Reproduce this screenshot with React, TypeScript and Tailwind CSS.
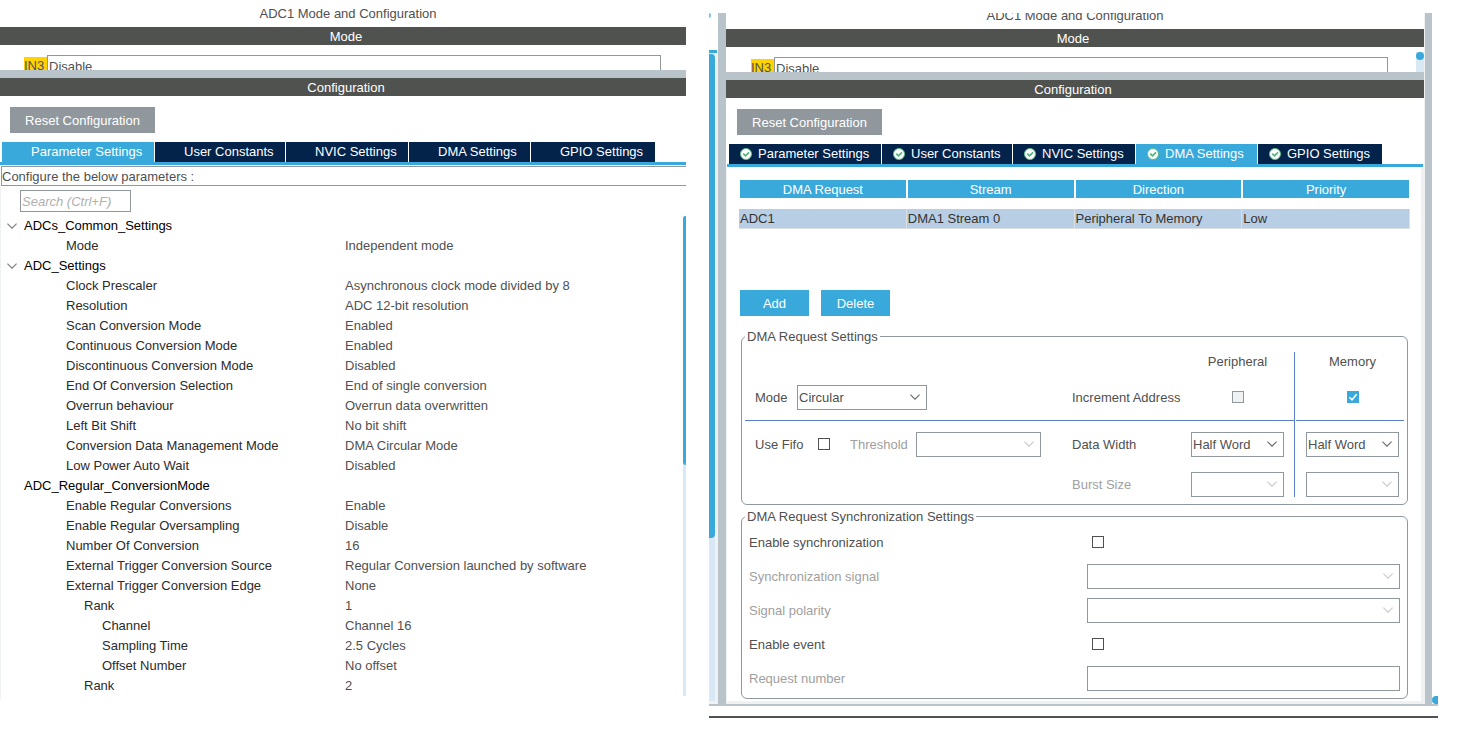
import { useId, useState, type ReactNode } from "react";

type Tab = { name: string; width: string };

const TABS: Tab[] = [
  { name: "Parameter Settings", width: "w-[152px]" },
  { name: "User Constants", width: "w-[130px]" },
  { name: "NVIC Settings", width: "w-[122px]" },
  { name: "DMA Settings", width: "w-[121px]" },
  { name: "GPIO Settings", width: "w-[124px]" },
];

type Row = { name: string; value?: string; level: 0 | 1 | 2 | 3; open?: boolean };

const ROWS: Row[] = [
  { name: "ADCs_Common_Settings", level: 0, open: true },
  { name: "Mode", value: "Independent mode", level: 1 },
  { name: "ADC_Settings", level: 0, open: true },
  { name: "Clock Prescaler", value: "Asynchronous clock mode divided by 8", level: 1 },
  { name: "Resolution", value: "ADC 12-bit resolution", level: 1 },
  { name: "Scan Conversion Mode", value: "Enabled", level: 1 },
  { name: "Continuous Conversion Mode", value: "Enabled", level: 1 },
  { name: "Discontinuous Conversion Mode", value: "Disabled", level: 1 },
  { name: "End Of Conversion Selection", value: "End of single conversion", level: 1 },
  { name: "Overrun behaviour", value: "Overrun data overwritten", level: 1 },
  { name: "Left Bit Shift", value: "No bit shift", level: 1 },
  { name: "Conversion Data Management Mode", value: "DMA Circular Mode", level: 1 },
  { name: "Low Power Auto Wait", value: "Disabled", level: 1 },
  { name: "ADC_Regular_ConversionMode", level: 0 },
  { name: "Enable Regular Conversions", value: "Enable", level: 1 },
  { name: "Enable Regular Oversampling", value: "Disable", level: 1 },
  { name: "Number Of Conversion", value: "16", level: 1 },
  { name: "External Trigger Conversion Source", value: "Regular Conversion launched by software", level: 1 },
  { name: "External Trigger Conversion Edge", value: "None", level: 1 },
  { name: "Rank", value: "1", level: 2 },
  { name: "Channel", value: "Channel 16", level: 3 },
  { name: "Sampling Time", value: "2.5 Cycles", level: 3 },
  { name: "Offset Number", value: "No offset", level: 3 },
  { name: "Rank", value: "2", level: 2 },
];

const INDENT = ["", "pl-[66px]", "pl-[84px]", "pl-[102px]"];

function Chevron({ className = "" }: { className?: string }) {
  return (
    <svg viewBox="0 0 10 6" className={`h-[6px] w-[10px] shrink-0 ${className}`} fill="none" stroke="currentColor" strokeWidth="1.2" aria-hidden="true">
      <path d="M0.4 0.6 L5 5.2 L9.6 0.6" />
    </svg>
  );
}

function StatusIcon() {
  return (
    <svg viewBox="0 0 12 12" className="h-3 w-3 shrink-0" aria-hidden="true">
      <circle cx="6" cy="6" r="5.5" fill="#fff" stroke="#5fba86" strokeWidth="1" />
      <path d="M3.2 5.6 L5.5 7.9 L9 4.4" fill="none" stroke="#4fb37c" strokeWidth="1.6" />
    </svg>
  );
}

function Bar({ children, className }: { children: ReactNode; className: string }) {
  return <h2 className={`h-[18px] bg-[#505250] text-center leading-5 text-white ${className}`}>{children}</h2>;
}

function ModeSection({ className, scrollbar }: { className: string; scrollbar?: boolean }) {
  const id = useId();
  return (
    <div className="flex h-[25px] overflow-hidden">
      <div className={`flex min-w-0 flex-1 ${className}`}>
        <label htmlFor={id} className="mt-3 h-5 w-[23px] shrink-0 bg-[#ffd200] leading-[18px]">
          IN3
        </label>
        <input id={id} defaultValue="Disable" className="mt-[10px] h-[22px] min-w-0 flex-1 border border-[#90989e] bg-white px-px" />
      </div>
      {scrollbar && (
        <div className="mt-[5px] h-5 w-2 bg-[#d9e8f5]">
          <div className="h-2 rounded-full bg-[#39a9dc]" />
        </div>
      )}
    </div>
  );
}

function TabBar({ selected, status }: { selected: string; status?: boolean }) {
  return (
    <div role="tablist" className="flex gap-px">
      {TABS.map((t) => (
        <button
          key={t.name}
          role="tab"
          aria-selected={t.name === selected}
          className={`flex h-5 shrink-0 items-center gap-[6px] pl-[11px] whitespace-nowrap text-white ${t.width} ${
            t.name === selected ? "bg-[#39a9dc]" : "bg-[#03234b]"
          }`}
        >
          {status ? <StatusIcon /> : <span className="w-3" />}
          {t.name}
        </button>
      ))}
    </div>
  );
}

function ResetButton() {
  return <button className="h-[26px] w-[145px] bg-[#90989e] pt-[2px] text-white">Reset Configuration</button>;
}

function ParameterTree() {
  return (
    <div className="flex pb-[3px]">
      <table className="w-full table-fixed border-collapse text-left">
        <colgroup>
          <col className="w-[343px]" />
          <col />
        </colgroup>
        <tbody>
          {ROWS.map((r, i) =>
            r.level === 0 ? (
              <tr key={i} className="h-5">
                <th colSpan={2} className="p-0 font-normal text-black">
                  <div className="flex items-center">
                    {r.open ? (
                      <button aria-label={`Collapse ${r.name}`} className="pr-[7px] pl-[6px] text-[#808080]">
                        <Chevron />
                      </button>
                    ) : (
                      <span className="w-[23px]" />
                    )}
                    {r.name}
                  </div>
                </th>
              </tr>
            ) : (
              <tr key={i} className="h-5">
                <th className={`p-0 font-normal text-[#2b2b2b] ${INDENT[r.level]}`}>
                  <div className="-ml-px">{r.name}</div>
                </th>
                <td className="p-0 pl-px">{r.value}</td>
              </tr>
            ),
          )}
        </tbody>
      </table>
      <div className="flex w-[3px] shrink-0 flex-col bg-[#d9e8f5]">
        <div className="h-[249px] rounded-l-full bg-[#39a9dc]" />
      </div>
    </div>
  );
}

function ParameterPanel() {
  return (
    <section className="min-w-0 flex-[686]">
      <h1 className="h-[27px] pl-[10px] text-center leading-[27px]">ADC1 Mode and Configuration</h1>
      <Bar className="pl-[6px]">Mode</Bar>
      <ModeSection className="mr-[25px] ml-6" />
      <div className="h-2 bg-[#b8c4ca]" />
      <Bar className="pl-[6px]">Configuration</Bar>
      <div className="px-[10px] py-[11px]">
        <ResetButton />
      </div>
      <div className="-mt-[2px] border-b-[3px] border-[#39a9dc] pl-[2px]">
        <TabBar selected="Parameter Settings" />
      </div>
      <div className="mt-px ml-px h-5 border-y border-l border-[#90989e] leading-5">Configure the below parameters :</div>
      <div className="border-l border-[#f0f1f2]">
        <div className="px-[19px] py-1">
          <input
            aria-label="Search"
            placeholder="Search (Ctrl+F)"
            className="block h-[22px] w-[111px] border border-[#90989e] px-px italic placeholder:text-[#b0b0b0]"
          />
        </div>
        <ParameterTree />
      </div>
    </section>
  );
}

function Select({ label, value, className, disabled, id }: { label?: string; value?: string; className: string; disabled?: boolean; id?: string }) {
  return (
    <div className={`relative shrink-0 ${className}`}>
      <select
        id={id}
        aria-label={label}
        disabled={disabled}
        className="block h-[25px] w-full appearance-none border border-[#90989e] bg-white pl-px text-[#505050]"
      >
        <option>{value}</option>
      </select>
      <Chevron className={`pointer-events-none absolute top-[9px] right-[7px] ${disabled ? "text-[#cdcdcd]" : "text-[#707070]"}`} />
    </div>
  );
}

function Checkbox({ label, id, initial = false, disabled }: { label?: string; id?: string; initial?: boolean; disabled?: boolean }) {
  const [checked, setChecked] = useState(initial);
  return (
    <span className="relative mb-px block h-3 w-3 shrink-0">
      <input
        id={id}
        aria-label={label}
        type="checkbox"
        disabled={disabled}
        checked={checked}
        onChange={(e) => setChecked(e.target.checked)}
        className="block h-3 w-3 appearance-none border border-[#505050] bg-white checked:border-[#39a9dc] checked:bg-[#39a9dc] disabled:border-[#90989e] disabled:bg-[#f0f1f2]"
      />
      {checked && (
        <svg viewBox="0 0 12 12" className="pointer-events-none absolute inset-0" fill="none" stroke="#fff" strokeWidth="1.6" aria-hidden="true">
          <path d="M2.4 6.2 L5 8.9 L9.6 3.2" />
        </svg>
      )}
    </span>
  );
}

function Group({ title, className, children }: { title: string; className: string; children: ReactNode }) {
  return (
    <fieldset className="rounded-[6px] border border-[#90989e]">
      <legend className="ml-[3px] h-4 px-[2px] leading-[18px]">{title}</legend>
      <div className={className}>{children}</div>
    </fieldset>
  );
}

const REQUESTS = [["ADC1", "DMA1 Stream 0", "Peripheral To Memory", "Low"]];

function RequestTable() {
  return (
    <table className="w-full table-fixed border-separate border-spacing-0">
      <thead>
        <tr>
          {["DMA Request", "Stream", "Direction", "Priority"].map((h) => (
            <th key={h} className="h-[29px] border-x border-b-[11px] border-white bg-[#39a9dc] bg-clip-padding p-0 pt-px leading-[17px] font-normal text-white">
              {h}
            </th>
          ))}
        </tr>
      </thead>
      <tbody>
        {REQUESTS.map((r) => (
          <tr key={r[1]}>
            {r.map((c) => (
              <td key={c} className="h-5 border-r border-b border-[#dcdfe2] bg-[#b8cee4] p-0 pl-px leading-[19px] text-[#333]">
                {c}
              </td>
            ))}
          </tr>
        ))}
      </tbody>
    </table>
  );
}

function RequestSettings() {
  return (
    <Group title="DMA Request Settings" className="flex gap-px px-[3px] pt-2 pb-[7px]">
      <div className="min-w-0 flex-1 border-r border-[#5b7fc4]">
        <div className="flex h-[18px] justify-end pr-[10px] leading-5">
          <span className="w-[93px] text-center">Peripheral</span>
        </div>
        <div className="mt-[15px] flex h-[25px] items-center pr-[10px] pl-[10px]">
          <label htmlFor="mode" className="w-[42px]">
            Mode
          </label>
          <Select id="mode" value="Circular" className="w-[130px]" />
          <label htmlFor="inc-periph" className="ml-auto w-[119px]">
            Increment Address
          </label>
          <div className="flex w-[93px] justify-center">
            <Checkbox id="inc-periph" disabled />
          </div>
        </div>
        <div className="mt-[10px] h-px bg-[#5b7fc4]" />
        <div className="mt-[11px] flex h-[25px] items-center pr-[10px] pl-[10px]">
          <label htmlFor="fifo" className="w-[63px]">
            Use Fifo
          </label>
          <Checkbox id="fifo" />
          <label htmlFor="threshold" className="ml-5 w-[66px] text-[#a0a0a0]">
            Threshold
          </label>
          <Select id="threshold" disabled className="w-[125px]" />
          <label htmlFor="width-periph" className="ml-auto w-[119px]">
            Data Width
          </label>
          <Select id="width-periph" value="Half Word" className="w-[93px]" />
        </div>
        <div className="mt-[15px] flex h-[25px] items-center justify-end pr-[10px]">
          <label htmlFor="burst-periph" className="w-[119px] text-[#a0a0a0]">
            Burst Size
          </label>
          <Select id="burst-periph" disabled className="w-[93px]" />
        </div>
      </div>
      <div className="w-[108px] shrink-0">
        <div className="h-[18px] pr-[5px] pl-[10px] text-center leading-5">Memory</div>
        <div className="mt-[15px] flex h-[25px] items-center justify-center pr-[5px] pl-[10px]">
          <Checkbox label="Memory increment address" initial />
        </div>
        <div className="mt-[10px] h-px bg-[#5b7fc4]" />
        <div className="mt-[11px] flex flex-col gap-[15px] pr-[5px] pl-[10px]">
          <Select label="Memory data width" value="Half Word" className="w-full" />
          <Select label="Memory burst size" disabled className="w-full" />
        </div>
      </div>
    </Group>
  );
}

function SyncRow({ label, id, dim, children }: { label: string; id: string; dim?: boolean; children: ReactNode }) {
  return (
    <div className="flex h-[25px] items-center">
      <label htmlFor={id} className={`min-w-0 flex-1 ${dim ? "text-[#a0a0a0]" : ""}`}>
        {label}
      </label>
      <div className="w-[313px] shrink-0">{children}</div>
    </div>
  );
}

function SyncSettings() {
  return (
    <Group title="DMA Request Synchronization Settings" className="flex flex-col gap-[9px] px-[7px] pt-[6px] pb-[7px]">
      <SyncRow label="Enable synchronization" id="sync">
        <div className="pl-[5px]">
          <Checkbox id="sync" />
        </div>
      </SyncRow>
      <SyncRow label="Synchronization signal" id="signal" dim>
        <Select id="signal" disabled className="w-full" />
      </SyncRow>
      <SyncRow label="Signal polarity" id="polarity" dim>
        <Select id="polarity" disabled className="w-full" />
      </SyncRow>
      <SyncRow label="Enable event" id="event">
        <div className="pl-[5px]">
          <Checkbox id="event" />
        </div>
      </SyncRow>
      <SyncRow label="Request number" id="number" dim>
        <input id="number" disabled className="block h-[25px] w-full border border-[#90989e] bg-white" />
      </SyncRow>
    </Group>
  );
}

function DmaPanel() {
  return (
    <section className="mt-[13px] min-w-0 flex-[729]">
      <div className="flex border-b-2 border-[#b8c4ca]">
        <div className="flex w-[9px] shrink-0 flex-col border-b-[3px] border-[#f0f1f2]">
          <div className="h-[5px] w-[2px] rounded-r-full bg-[#7cc4e6]" />
          <div className="mt-8 h-[3px] w-2 bg-[#39a9dc]" />
          <div className="flex flex-1 flex-col border-r-[3px] border-[#f0f1f2] bg-[#d9e8f5] pt-px">
            <div className="h-[484px] rounded-r-[4px] bg-[#39a9dc]" />
          </div>
        </div>
        <div className="w-2 shrink-0 bg-[#b8c4ca]" />
        <div className="min-w-0 flex-1 border-r border-[#f0f1f2]">
          <div className="h-4 overflow-hidden">
            <h1 className="-mt-[11px] text-center leading-[27px]">ADC1 Mode and Configuration</h1>
          </div>
          <Bar className="pr-1">Mode</Bar>
          <ModeSection className="mr-7 ml-[25px]" scrollbar />
          <div className="h-2 bg-[#b8c4ca]" />
          <Bar className="pr-1">Configuration</Bar>
          <div className="px-[11px] py-[11px]">
            <ResetButton />
          </div>
          <div className="-mt-[2px] mr-px ml-px border-b-[3px] border-[#39a9dc] pl-[2px]">
            <TabBar selected="DMA Settings" status />
          </div>
          <div className="border-r-[3px] border-b-[3px] border-l border-[#f0f1f2] pt-[13px] pr-[11px] pb-[2px] pl-3">
            <RequestTable />
            <div className="mt-[61px] flex gap-3 pl-px text-white">
              <button className="h-[26px] w-[69px] bg-[#39a9dc] pt-[2px]">Add</button>
              <button className="h-[26px] w-[69px] bg-[#39a9dc] pt-[2px]">Delete</button>
            </div>
            <div className="mt-3 flex flex-col gap-[3px] pr-[2px] pl-[2px]">
              <RequestSettings />
              <SyncSettings />
            </div>
          </div>
        </div>
        <div className="w-[7px] shrink-0 bg-[#b8c4ca]" />
        <div className="flex w-[6px] shrink-0 items-end">
          <div className="h-2 w-full rounded-l-full bg-[#39a9dc]" />
        </div>
      </div>
      <div className="mt-[10px] h-[2px] bg-[#505250]" />
    </section>
  );
}

export default function App() {
  return (
    <main className="flex min-h-screen items-start gap-[23px] bg-white pr-9 font-['Liberation_Sans',Arial,sans-serif] text-[13px] leading-4 text-[#505050]">
      <ParameterPanel />
      <DmaPanel />
    </main>
  );
}
